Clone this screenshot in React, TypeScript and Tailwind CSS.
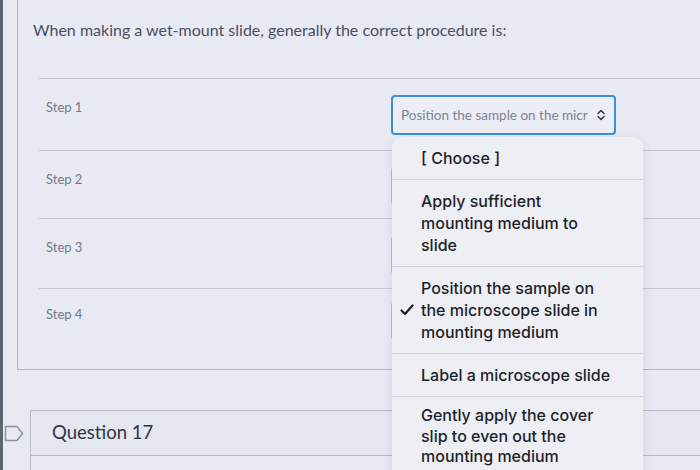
import React from "react";

const lato = { fontFamily: "Lato, 'Open Sans', sans-serif" };
const inter = { fontFamily: "Inter, 'Liberation Sans', sans-serif" };

function Chevrons() {
  return (
    <svg width="10" height="12" viewBox="0 0 10 12" fill="none" stroke="#3a3f4c" strokeWidth="1.6" strokeLinecap="round" strokeLinejoin="round">
      <polyline points="2,4.5 5,1.5 8,4.5" />
      <polyline points="2,7.5 5,10.5 8,7.5" />
    </svg>
  );
}

function Check() {
  return (
    <svg width="14" height="12" viewBox="0 0 14 12" fill="none" stroke="#1d1f2a" strokeWidth="2.2" strokeLinecap="round" strokeLinejoin="round">
      <polyline points="1.5,6.5 5,10 12.5,1.5" />
    </svg>
  );
}

function Row({ label, h, selMt, labelPt, first }: { label: string; h: string; selMt: string; labelPt: string; first?: boolean }) {
  return (
    <div className={`flex border-t border-[#c3c7d4] ${h}`}>
      <div className={`w-[352px] shrink-0 pl-[7px] ${labelPt} text-[13px] leading-[18px] text-[#737989]`}>{label}</div>
      {first ? (
        <div className={`${selMt} w-[225px] h-[40px] border-2 border-[#3c8edb] rounded-[4px] bg-[#eceef5] flex items-center pl-[8px] pr-[8px]`}>
          <span className="flex-1 overflow-hidden whitespace-nowrap text-[13.5px] text-[#7c8294]">Position the sample on the micr</span>
          <Chevrons />
        </div>
      ) : (
        <div className={`${selMt} w-[225px] h-[40px] border border-[#b7bbc8] rounded-[4px] bg-[#eceef5]`} />
      )}
    </div>
  );
}

function Item({ lines, checked, last }: { lines: string[]; checked?: boolean; last?: boolean }) {
  return (
    <div className={`flex items-center ${last ? "pt-[8px] pb-[10px]" : "py-[10px] border-b border-[#cdd0da]"}`}>
      <div className="w-[29px] shrink-0 flex justify-center pl-[1px]">{checked ? <Check /> : null}</div>
      <div className={`text-[16px] ${last ? "leading-[20.5px]" : "leading-[22px]"} font-medium text-[#1d1f2b]`}>
        {lines.map((l, i) => (
          <div key={i} className="whitespace-nowrap">{l}</div>
        ))}
      </div>
    </div>
  );
}

export default function App() {
  return (
    <div className="w-[700px] h-[470px] overflow-hidden relative bg-[#e7eaf2] flex" style={lato}>
      <div className="w-[3px] shrink-0 bg-[#5f6673]" />
      <div className="flex-1 flex flex-col min-w-0">
        <div className="ml-[14px] w-[720px] h-[370px] shrink-0 border-l border-b border-[#aeb2c4] flex flex-col">
          <div className="h-[78px] shrink-0 pl-[15px] pt-[18px] text-[16px] leading-[24px] text-[#4a4f5f]">
            When making a wet-mount slide, generally the correct procedure is:
          </div>
          <div className="ml-[21px] flex flex-col flex-1">
            <Row label="Step 1" h="h-[72px]" selMt="mt-[16px]" labelPt="pt-[19px]" first />
            <Row label="Step 2" h="h-[68px]" selMt="mt-[15px]" labelPt="pt-[19px]" />
            <Row label="Step 3" h="h-[70px]" selMt="mt-[16px]" labelPt="pt-[19px]" />
            <Row label="Step 4" h="flex-1" selMt="mt-[12px]" labelPt="pt-[16px]" />
          </div>
        </div>
        <div className="mt-[40px] flex">
          <div className="w-[27px] shrink-0 flex items-center justify-start pl-[1px]">
            <svg width="20" height="17" viewBox="0 0 20 17" fill="none" stroke="#8a90a0" strokeWidth="1.4" strokeLinejoin="round">
              <path d="M1.5 1.5 H13 L18.5 8.5 L13 15.5 H1.5 Z" />
            </svg>
          </div>
          <div className="w-[700px] h-[46px] border border-r-0 border-[#b6bacb] bg-[#e4e7f0] flex items-center pl-[21px] text-[18.5px] text-[#2d3545]">
            Question 17
          </div>
        </div>
        <div className="ml-[27px] flex-1 border-l border-[#b6bacb]" />
      </div>

      <div
        className="absolute left-[392px] top-[137px] w-[251px] rounded-t-[10px] bg-[#edeff4] shadow-[0_2px_10px_rgba(60,70,100,0.12)]"
        style={inter}
      >
        <Item lines={["[ Choose ]"]} />
        <Item lines={["Apply sufficient", "mounting medium to", "slide"]} />
        <Item lines={["Position the sample on", "the microscope slide in", "mounting medium"]} checked />
        <Item lines={["Label a microscope slide"]} />
        <Item lines={["Gently apply the cover", "slip to even out the", "mounting medium"]} last />
      </div>
    </div>
  );
}
